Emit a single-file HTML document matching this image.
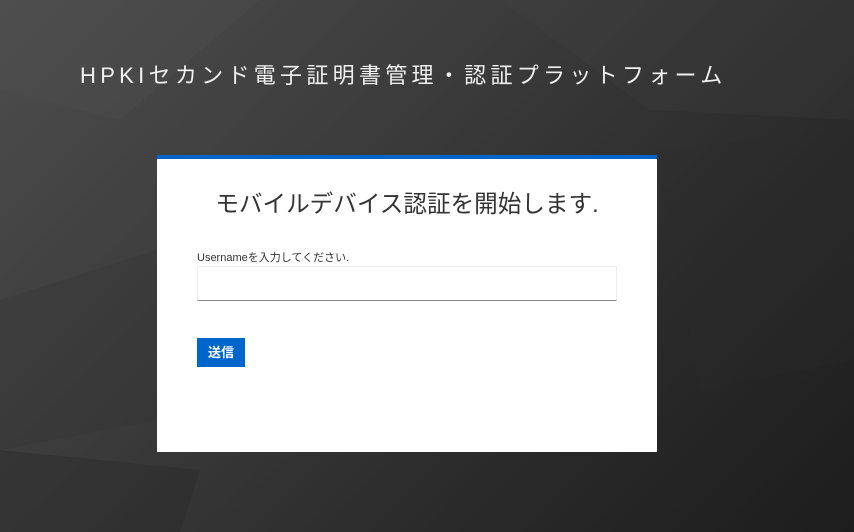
<!DOCTYPE html>
<html><head><meta charset="utf-8"><style>
html,body{margin:0;padding:0;width:854px;height:532px;overflow:hidden}
body{background:linear-gradient(135deg,#4d4d4d 0%,#3a3a3a 40%,#2a2a2a 70%,#1d1d1d 100%);font-family:"Liberation Sans","Noto Sans CJK JP",sans-serif;position:relative}
svg.bg{position:absolute;left:0;top:0}
.hdr{position:absolute;left:80px;top:58px;color:#f0f0f0;font-size:22px;letter-spacing:4.3px;white-space:nowrap}
.card{position:absolute;left:157px;top:155px;width:500px;height:297px;background:#fff;border-top:4px solid #0066cc;box-sizing:border-box}
.title{position:absolute;left:0;width:500px;top:26px;text-align:center;font-size:23.6px;color:#333;letter-spacing:0}
.lbl{position:absolute;left:40px;top:90px;font-size:11px;color:#333}
.inp{position:absolute;left:40px;top:107px;width:420px;height:35px;box-sizing:border-box;border:1px solid #ededed;border-bottom:1px solid #8a8a8a}
.btn{position:absolute;left:40px;top:179px;width:48px;height:29px;background:#0066cc;color:#fff;font-size:13px;font-weight:bold;text-align:center;line-height:29px}
</style></head><body>
<svg class="bg" width="854" height="532">
<polygon points="0,0 260,0 120,120 0,90" fill="#555" opacity=".2"/>
<polygon points="500,0 854,0 854,120 650,110" fill="#444" opacity=".2"/>
<polygon points="0,300 157,250 157,420 0,450" fill="#2f2f2f" opacity=".25"/>
<polygon points="657,150 854,130 854,360 700,390" fill="#2a2a2a" opacity=".25"/>
<polygon points="0,450 200,470 180,532 0,532" fill="#262626" opacity=".3"/>
</svg>
<div class="hdr">HPKIセカンド電子証明書管理・認証プラットフォーム</div>
<div class="card">
<div class="title">モバイルデバイス認証を開始します.</div>
<div class="lbl">Usernameを入力してください.</div>
<div class="inp"></div>
<div class="btn">送信</div>
</div>
</body></html>
